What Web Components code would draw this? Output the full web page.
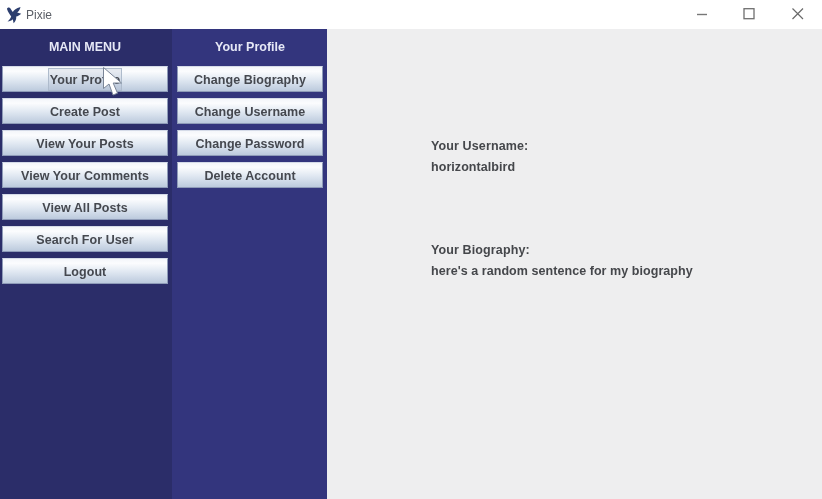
<!DOCTYPE html>
<html>
<head>
<meta charset="utf-8">
<title>Pixie</title>
<style>
  html, body { margin: 0; height: 100%; overflow: hidden; }
  body { font-family: 'Liberation Sans', Arial, sans-serif; }
</style>
</head>
<body>
<px-window>
  <px-titlebar slot="title">Pixie</px-titlebar>
  <px-menu slot="menu" heading="MAIN MENU" shade="#2b2d69">
    <px-button focused>Your Profile</px-button>
    <px-button>Create Post</px-button>
    <px-button>View Your Posts</px-button>
    <px-button>View Your Comments</px-button>
    <px-button>View All Posts</px-button>
    <px-button>Search For User</px-button>
    <px-button>Logout</px-button>
  </px-menu>
  <px-menu slot="submenu" heading="Your Profile" shade="#33357d" inset="5px">
    <px-button>Change Biography</px-button>
    <px-button>Change Username</px-button>
    <px-button>Change Password</px-button>
    <px-button>Delete Account</px-button>
  </px-menu>
  <px-profile slot="content">
    <px-field label="Your Username:">horizontalbird</px-field>
    <px-field label="Your Biography:">here's a random sentence for my biography</px-field>
  </px-profile>
  <px-cursor slot="cursor"></px-cursor>
</px-window>

<script>
class PxWindow extends HTMLElement {
  constructor() {
    super();
    this.attachShadow( {mode: 'open'} ).innerHTML = `
      <style>
        :host {
          display: grid;
          filter: blur( 0.4px );
          grid-template-columns: 172px 155px 1fr;
          grid-template-rows: 29px 1fr;
          height: 499px;
          position: relative;
          width: 822px;
          overflow: hidden;
          background: #eeeeef;
        }
        .top { grid-column: 1 / -1; display: grid; }
      </style>
      <div class="top"><slot name="title"></slot></div>
      <slot name="menu"></slot>
      <slot name="submenu"></slot>
      <slot name="content"></slot>
      <slot name="cursor"></slot>
    `;
  }
}

class PxTitlebar extends HTMLElement {
  constructor() {
    super();
    this.attachShadow( {mode: 'open'} ).innerHTML = `
      <style>
        :host {
          align-items: center;
          background: #ffffff;
          color: #5a5e66;
          display: flex;
          font-size: 12px;
          height: 29px;
          padding-left: 6px;
        }
        .name { flex-grow: 1; margin-left: 4px; }
        .ctl { display: block; height: 29px; width: 48px; }
        .ctls { display: flex; padding-right: 1px; }
      </style>
      <svg width="16" height="18" viewBox="0 0 16 18">
        <path fill="#2c3e6e" d="M1 3 C1 1.5 3.5 1 4.5 2.5 C5.2 3.8 5.8 5 6.8 6 C8 4 10 2.2 14.5 1 C14 3.5 12.8 5.2 11.2 6.6 L15.2 7.8 C13.6 9.4 12 10.2 10.2 10.6 C10.6 13 9.6 15.6 7.6 17.2 L6.8 13.2 C5.5 14.5 3.8 15.4 1.5 15.6 C3 14 4.5 12.5 5.2 10.4 C3.6 8.4 2 6 1 3 Z"/>
      </svg>
      <span class="name"><slot></slot></span>
      <div class="ctls">
        <svg class="ctl" viewBox="0 0 48 29"><path d="M20 14.5 H30" stroke="#777" stroke-width="1.4"/></svg>
        <svg class="ctl" viewBox="0 0 48 29"><rect x="19" y="8.7" width="10" height="10" fill="none" stroke="#6f6f6f" stroke-width="1.3"/></svg>
        <svg class="ctl" viewBox="0 0 48 29"><path d="M19.5 8.5 L30 19 M30 8.5 L19.5 19" stroke="#6a6a6a" stroke-width="1.2"/></svg>
      </div>
    `;
  }
}

class PxMenu extends HTMLElement {
  constructor() {
    super();
    this.attachShadow( {mode: 'open'} ).innerHTML = `
      <style>
        :host {
          display: flex;
          flex-direction: column;
          height: 470px;
          box-sizing: border-box;
        }
        h2 {
          color: #e6e8f6;
          font-size: 12.5px;
          font-weight: 700;
          height: 37px;
          line-height: 37px;
          margin: 0;
          text-align: center;
        }
        .list { display: flex; flex-direction: column; gap: 6px; }
      </style>
      <h2></h2>
      <div class="list"><slot></slot></div>
    `;
  }

  connectedCallback() {
    this.shadowRoot.querySelector( 'h2' ).textContent = this.getAttribute( 'heading' );
    this.style.background = this.getAttribute( 'shade' );
    this.style.padding = '0 4px 0 ' + ( this.getAttribute( 'inset' ) || '2px' );
  }
}

class PxButton extends HTMLElement {
  constructor() {
    super();
    this.attachShadow( {mode: 'open'} ).innerHTML = `
      <style>
        :host {
          align-items: center;
          background: linear-gradient( #f4f6fa 0%, #fbfcfe 18%, #dfe7f1 55%, #bccadd 100% );
          border: 1px solid #8e9bb8;
          border-top-color: #d5dbe8;
          box-sizing: border-box;
          color: #45484f;
          display: flex;
          font-size: 12.5px;
          font-weight: 700;
          height: 26px;
          justify-content: center;
          letter-spacing: 0.05px;
          padding-top: 2px;
        }
        :host( [focused] ) span {
          background: rgba( 160, 175, 195, 0.22 );
          margin-top: -2px;
          padding: 4px 1px 3px;
          outline: 1px solid #aebbcc;
        }
      </style>
      <span><slot></slot></span>
    `;
  }
}

class PxProfile extends HTMLElement {
  constructor() {
    super();
    this.attachShadow( {mode: 'open'} ).innerHTML = `
      <style>
        :host {
          display: flex;
          flex-direction: column;
          gap: 67px;
          padding: 109px 0 0 104px;
        }
      </style>
      <slot></slot>
    `;
  }
}

class PxField extends HTMLElement {
  constructor() {
    super();
    this.attachShadow( {mode: 'open'} ).innerHTML = `
      <style>
        :host {
          color: #45474b;
          display: flex;
          flex-direction: column;
          font-size: 12.5px;
          font-weight: 700;
          gap: 5px;
          letter-spacing: 0.06px;
          line-height: 16px;
        }
        .label { letter-spacing: 0.12px; }
      </style>
      <div class="label"></div>
      <div><slot></slot></div>
    `;
  }

  connectedCallback() {
    this.shadowRoot.querySelector( '.label' ).textContent = this.getAttribute( 'label' );
  }
}

// Pointer lies over the first button
class PxCursor extends HTMLElement {
  constructor() {
    super();
    this.attachShadow( {mode: 'open'} ).innerHTML = `
      <style>
        :host { left: 102px; position: absolute; top: 66px; }
        svg { display: block; }
      </style>
      <svg width="21" height="31" viewBox="0 0 21 31">
        <path fill="#ffffff" stroke="#7b8698" stroke-width="1" stroke-linejoin="round" d="M1.5 1.5 V22.5 L7 18 L11 29 L15.5 27.2 L11.2 17 H19.5 Z"/>
      </svg>
    `;
  }
}

window.customElements.define( 'px-window', PxWindow );
window.customElements.define( 'px-titlebar', PxTitlebar );
window.customElements.define( 'px-menu', PxMenu );
window.customElements.define( 'px-button', PxButton );
window.customElements.define( 'px-profile', PxProfile );
window.customElements.define( 'px-field', PxField );
window.customElements.define( 'px-cursor', PxCursor );
</script>
</body>
</html>
